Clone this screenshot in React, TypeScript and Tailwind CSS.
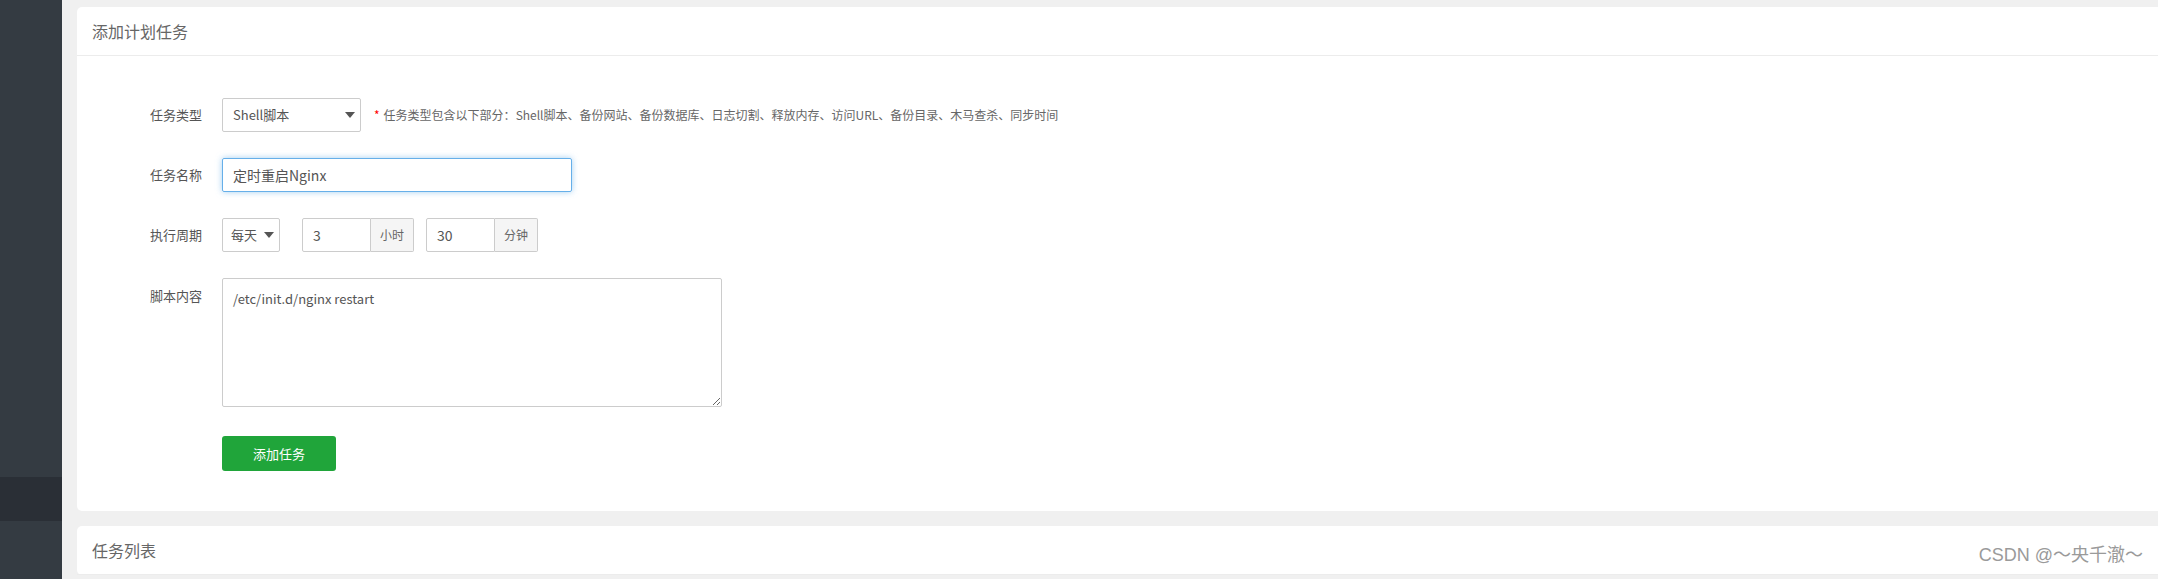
import React from 'react';

const FONT = '"Noto Sans CJK SC", "Noto Sans", sans-serif';

const Arrow: React.FC = () => (
  <svg width="10" height="6" viewBox="0 0 10 6" className="shrink-0">
    <path d="M0 0 L10 0 L5 6 Z" fill="#555" />
  </svg>
);

const FormRow: React.FC<{ label: string; top?: boolean; children: React.ReactNode }> = ({ label, top, children }) => (
  <div className={`flex ${top ? 'items-start' : 'items-center'} mb-[26px]`}>
    <div className={`w-[125px] shrink-0 text-right text-[13px] leading-[20px] text-[#555] ${top ? 'pt-[8px]' : ''}`}>
      {label}
    </div>
    <div className="ml-[20px] flex items-center">{children}</div>
  </div>
);

const UnitInput: React.FC<{ value: string; unit: string }> = ({ value, unit }) => (
  <div className="flex h-[34px]">
    <div className="w-[69px] h-full border border-[#ccc] rounded-l-[2px] pl-[10px] flex items-center text-[14px] text-[#555]">
      {value}
    </div>
    <div className="w-[43px] h-full border border-l-0 border-[#ccc] rounded-r-[2px] bg-[#f5f5f5] flex items-center justify-center text-[12px] text-[#666]">
      {unit}
    </div>
  </div>
);

const App: React.FC = () => {
  const types = 'Shell脚本、备份网站、备份数据库、日志切割、释放内存、访问URL、备份目录、木马查杀、同步时间';

  return (
    <div className="flex w-full h-[579px] overflow-hidden bg-[#f0f0f0]" style={{ fontFamily: FONT }}>
      {/* Sidebar */}
      <div className="w-[62px] shrink-0 bg-[#343b42] pt-[477px]">
        <div className="h-[44px] bg-[#2a2f36]" />
      </div>

      {/* Content */}
      <div className="flex-1 pl-[15px] pt-[7px] relative">
        <div className="bg-white rounded-l-[5px]">
          <div className="h-[49px] border-b border-[#ececec] px-[15px] flex items-center text-[16px] text-[#666]">
            添加计划任务
          </div>

          <div className="pt-[42px] pb-[40px]">
            <FormRow label="任务类型">
              <div className="w-[139px] h-[34px] border border-[#ccc] rounded-[2px] pl-[10px] pr-[5px] flex items-center justify-between text-[13px] text-[#555]">
                <span>Shell脚本</span>
                <Arrow />
              </div>
              <div className="ml-[13px] flex items-center text-[12px] text-[#666]">
                <span className="text-[#f00] mr-[4px]">*</span>
                <span>任务类型包含以下部分：{types}</span>
              </div>
            </FormRow>

            <FormRow label="任务名称">
              <div className="w-[350px] h-[34px] border border-[#66afe9] rounded-[2px] pl-[10px] flex items-center text-[14px] text-[#555] shadow-[0_0_6px_rgba(102,175,233,0.6)]">
                定时重启Nginx
              </div>
            </FormRow>

            <FormRow label="执行周期">
              <div className="w-[58px] h-[34px] border border-[#ccc] rounded-[2px] pl-[8px] pr-[5px] flex items-center justify-between text-[13px] text-[#555]">
                <span>每天</span>
                <Arrow />
              </div>
              <div className="ml-[22px]">
                <UnitInput value="3" unit="小时" />
              </div>
              <div className="ml-[12px]">
                <UnitInput value="30" unit="分钟" />
              </div>
            </FormRow>

            <div className="flex items-start">
              <div className="w-[125px] shrink-0 text-right text-[13px] leading-[20px] text-[#555] pt-[8px]">脚本内容</div>
              <textarea
                className="ml-[20px] w-[500px] h-[129px] border border-[#ccc] rounded-[2px] px-[10px] py-[10px] text-[13px] leading-[20px] text-[#555] outline-none"
                defaultValue="/etc/init.d/nginx restart"
                readOnly
              />
            </div>

            <button className="mt-[29px] ml-[145px] w-[114px] h-[35px] bg-[#20a53a] text-white text-[13px] rounded-[3px]">
              添加任务
            </button>
          </div>
        </div>

        <div className="mt-[15px] bg-white rounded-l-[5px]">
          <div className="h-[49px] border-b border-[#ececec] px-[15px] flex items-center text-[16px] text-[#666]">
            任务列表
          </div>
        </div>

        <div
          className="absolute right-[15px] top-[543px] text-[18px] leading-[24px] text-[#9a9a9a]"
          style={{ fontFamily: '"Liberation Sans", "Noto Sans CJK SC", sans-serif' }}
        >
          CSDN @～央千澈～
        </div>
      </div>
    </div>
  );
};

export default App;
